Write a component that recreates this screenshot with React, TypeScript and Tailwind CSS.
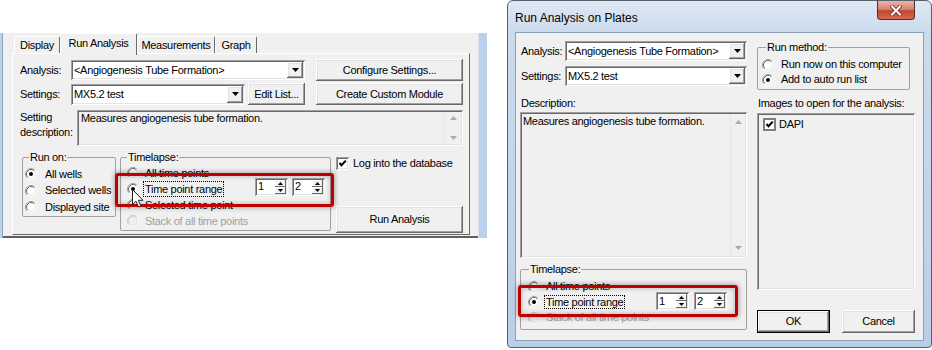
import React from 'react';

const SUNKEN =
  'shadow-[inset_1px_1px_0_#a0a0a0,inset_-1px_-1px_0_#ffffff,inset_2px_2px_0_#696969,inset_-2px_-2px_0_#e3e3e3]';
const RAISED =
  'shadow-[inset_-1px_-1px_0_#696969,inset_1px_1px_0_#ffffff,inset_-2px_-2px_0_#a0a0a0,inset_2px_2px_0_#e3e3e3]';
const RAISED_THIN = 'shadow-[inset_-1px_-1px_0_#696969,inset_1px_1px_0_#ffffff]';
const RED_BOX =
  'absolute border-[3px] border-[#c00000] rounded-[3px] shadow-[0_0_5px_1px_rgba(0,0,0,0.3),inset_0_0_4px_1px_rgba(0,0,0,0.2)] pointer-events-none';
const DISABLED_TEXT = 'text-[#a0a0a0]';

function Tri({ up = false, color = '#000', w = 7, h = 4 }: { up?: boolean; color?: string; w?: number; h?: number }) {
  return (
    <svg width={w} height={h} viewBox={`0 0 ${w} ${h}`} className="block">
      <polygon points={up ? `0,${h} ${w},${h} ${w / 2},0` : `0,0 ${w},0 ${w / 2},${h}`} fill={color} />
    </svg>
  );
}

function Radio({ checked = false, disabled = false }: { checked?: boolean; disabled?: boolean }) {
  const outerDark = disabled ? '#c8c8c8' : '#a0a0a0';
  const innerDark = disabled ? '#d4d4d4' : '#696969';
  return (
    <svg width="12" height="12" viewBox="0 0 12 12" className="shrink-0 block">
      <circle cx="6" cy="6" r="5" fill={disabled ? '#f0f0f0' : '#ffffff'} />
      <path d="M2.11 9.89 A5.5 5.5 0 0 1 9.89 2.11" stroke={outerDark} fill="none" />
      <path d="M9.89 2.11 A5.5 5.5 0 0 1 2.11 9.89" stroke="#ffffff" fill="none" />
      <path d="M2.82 9.18 A4.5 4.5 0 0 1 9.18 2.82" stroke={innerDark} fill="none" />
      <path d="M9.18 2.82 A4.5 4.5 0 0 1 2.82 9.18" stroke="#e3e3e3" fill="none" />
      {checked && <circle cx="6" cy="6" r="2" fill="#000" />}
    </svg>
  );
}

function Check({ flat = false }: { flat?: boolean }) {
  return (
    <div
      className={`w-[13px] h-[13px] bg-white shrink-0 flex items-center justify-center ${
        flat ? 'border-2 border-[#7f7f7f]' : SUNKEN
      }`}
    >
      <svg width="9" height="9" viewBox="0 0 9 9" className="block">
        <path d="M1.5 4 L3.5 6.2 L7.8 1.6" stroke="#000" strokeWidth="2" fill="none" />
      </svg>
    </div>
  );
}

function Combo({ text, className }: { text: string; className: string }) {
  return (
    <div className={`bg-white flex items-stretch p-[2px] ${SUNKEN} ${className}`}>
      <span className="flex-1 pl-[1px] flex items-center whitespace-nowrap overflow-hidden">{text}</span>
      <div className={`w-[16px] flex items-center justify-center bg-[#f0f0f0] ${RAISED}`}>
        <Tri />
      </div>
    </div>
  );
}

function Btn({ children, className }: { children: React.ReactNode; className: string }) {
  return (
    <div className={`flex items-center justify-center bg-[#f0f0f0] shrink-0 ${RAISED} ${className}`}>
      {children}
    </div>
  );
}

function Spinner({ value }: { value: string }) {
  return (
    <div className={`w-[33px] h-[18px] bg-white flex items-stretch p-[2px] shrink-0 ${SUNKEN}`}>
      <span className="flex-1 pl-[1px] flex items-center">{value}</span>
      <div className="w-[11px] flex flex-col">
        <div className={`flex-1 flex items-center justify-center bg-[#f0f0f0] ${RAISED_THIN}`}>
          <Tri up w={5} h={3} />
        </div>
        <div className={`flex-1 flex items-center justify-center bg-[#f0f0f0] ${RAISED_THIN}`}>
          <Tri w={5} h={3} />
        </div>
      </div>
    </div>
  );
}

function Option({
  label,
  checked,
  disabled,
  focused,
  gap,
  height,
}: {
  label: string;
  checked?: boolean;
  disabled?: boolean;
  focused?: boolean;
  gap: string;
  height: string;
}) {
  return (
    <div className={`flex items-center ${height}`}>
      <Radio checked={checked} disabled={disabled} />
      {focused ? (
        <span className={`border border-dotted border-black px-[1px] leading-[14px] ${gap}`}>{label}</span>
      ) : (
        <span className={`whitespace-nowrap ${gap} ${disabled ? DISABLED_TEXT : ''}`}>{label}</span>
      )}
    </div>
  );
}

function Tab({ label, width, selected }: { label: string; width: string; selected?: boolean }) {
  if (selected) {
    return (
      <div
        className={`relative z-10 h-[22px] -mb-[2px] pt-[3px] flex justify-center bg-[#f0f0f0] border-t border-l border-r border-t-white border-l-white border-r-[#696969] rounded-t-[2px] ${width}`}
      >
        {label}
      </div>
    );
  }
  return (
    <div
      className={`h-[17px] flex items-center justify-center border-t border-l border-r border-t-white border-l-white border-r-[#696969] rounded-t-[2px] ${width}`}
    >
      {label}
    </div>
  );
}

function ScrollColumn({ className }: { className: string }) {
  return (
    <div className={`flex flex-col justify-between items-center border-l border-[#e6e6e6] ${className}`}>
      <Tri up w={7} h={4} color="#a9a9a9" />
      <Tri w={7} h={4} color="#a9a9a9" />
    </div>
  );
}

function Cursor() {
  return (
    <svg width="12" height="19" viewBox="0 0 12 19" className="absolute left-[132px] top-[189px]">
      <path d="M0.5 0.5 L0.5 15.5 L4 12.2 L6.6 18 L8.8 17 L6.3 11.3 L11 11.3 Z" fill="#ffffff" stroke="#222" />
    </svg>
  );
}

function LeftPanel() {
  return (
    <div className="w-[487px] h-[205px] mt-[33px] flex shrink-0">
      <div className="w-[3px] bg-[#b9d1ea] border-r border-[#8da4bf]" />
      <div className="w-[475px] bg-[#f0f0f0] border-b-2 border-[#5f5f5f] flex flex-col">
        <div className="ml-[9px] w-[458px] flex flex-col">
          <div className="h-[20px] flex items-end pl-[2px]">
            <Tab label="Display" width="w-[46px]" />
            <Tab label="Run Analysis" width="w-[77px]" selected />
            <Tab label="Measurements" width="w-[78px]" />
            <Tab label="Graph" width="w-[42px]" />
          </div>
          <div className="h-[182px] border border-t-white border-l-white border-r-[#696969] border-b-[#696969] pl-[7px] pt-[5px] flex flex-col">
            <div className="flex items-center h-[22px]">
              <span className="w-[51px]">Analysis:</span>
              <Combo text="<Angiogenesis Tube Formation>" className="w-[234px] h-[20px]" />
              <Btn className="ml-[11px] w-[147px] h-[22px]">Configure Settings...</Btn>
            </div>
            <div className="flex items-center h-[22px] mt-[2px]">
              <span className="w-[51px]">Settings:</span>
              <Combo text="MX5.2 test" className="w-[174px] h-[21px]" />
              <Btn className="ml-[3px] w-[57px] h-[22px]">Edit List...</Btn>
              <Btn className="ml-[11px] w-[147px] h-[22px]">Create Custom Module</Btn>
            </div>
            <div className="flex mt-[5px] h-[36px]">
              <div className="w-[57px] leading-[15px]">
                Setting
                <br />
                description:
              </div>
              <div className={`w-[386px] h-[36px] bg-[#f0f0f0] p-[2px] flex ${SUNKEN}`}>
                <span className="flex-1 pl-[2px]">Measures angiogenesis tube formation.</span>
                <ScrollColumn className="w-[17px] py-[4px]" />
              </div>
            </div>
            <div className="flex mt-[5px]">
              <fieldset className="ml-[2px] w-[94px] h-[66px] border border-[#a0a0a0] rounded-[2px]">
                <legend className="ml-[6px] px-[1px] leading-[13px]">Run on:</legend>
                <div className="pl-[2px] pt-[2px] flex flex-col">
                  <Option label="All wells" checked gap="ml-[8px]" height="h-[16.5px]" />
                  <Option label="Selected wells" gap="ml-[8px]" height="h-[16.5px]" />
                  <Option label="Displayed site" gap="ml-[8px]" height="h-[16.5px]" />
                </div>
              </fieldset>
              <fieldset className="ml-[4px] w-[211px] h-[80px] border border-[#a0a0a0] rounded-[2px]">
                <legend className="ml-[6px] px-[1px] leading-[13px]">Timelapse:</legend>
                <div className="pl-[6px] pr-[5px] pt-[1px] flex flex-col">
                  <Option label="All time points" gap="ml-[6px]" height="h-[16px]" />
                  <div className="flex items-center h-[16px]">
                    <Radio checked />
                    <span className="ml-[4px] border border-dotted border-black px-[1px] leading-[14px]">
                      Time point range
                    </span>
                    <div className="ml-auto mb-[5px] flex gap-[4px]">
                      <Spinner value="1" />
                      <Spinner value="2" />
                    </div>
                  </div>
                  <Option label="Selected time point" gap="ml-[6px]" height="h-[16px]" />
                  <Option label="Stack of all time points" disabled gap="ml-[6px]" height="h-[16px]" />
                </div>
              </fieldset>
              <div className="ml-[5px] w-[127px] h-[82px] flex flex-col justify-between">
                <div className="flex items-center gap-[4px] mt-[6px]">
                  <Check />
                  <span>Log into the database</span>
                </div>
                <Btn className="w-[127px] h-[27px]">Run Analysis</Btn>
              </div>
            </div>
          </div>
        </div>
      </div>
      <div className="w-[9px] bg-[#b9d1ea] border-l border-[#dbe5f1]" />
    </div>
  );
}

function CloseButton() {
  return (
    <div className="absolute top-0 right-[16px] w-[38px] h-[19px] rounded-b-[4px] border border-t-0 border-[#5b2a24] bg-[linear-gradient(180deg,#eab4a8_0%,#d88471_45%,#c4452f_55%,#d76a50_100%)] flex items-center justify-center">
      <svg width="12" height="11" viewBox="0 0 12 11" className="block">
        <path d="M2 1.5 L10 9.5 M10 1.5 L2 9.5" stroke="#6b2b22" strokeWidth="3.6" strokeLinecap="square" />
        <path d="M2 1.5 L10 9.5 M10 1.5 L2 9.5" stroke="#ffffff" strokeWidth="2" strokeLinecap="square" />
      </svg>
    </div>
  );
}

function Dialog() {
  return (
    <div className="ml-[20px] w-[425px] h-[348px] shrink-0 rounded-t-[6px] rounded-b-[4px] border border-[#56616f] bg-[linear-gradient(180deg,#e0e9f4_0px,#cbdbed_30px,#b9cfe7_100%)] flex flex-col relative">
      <div className="h-[31px] pl-[7px] pt-[7px] relative">
        <span className="text-[12px] leading-[20px] tracking-normal">Run Analysis on Plates</span>
        <CloseButton />
      </div>
      <div className="mx-[7px] h-[309px] border border-[#8aa1ba] bg-[#f0f0f0] flex pl-[4px] pt-[8px]">
        <div className="w-[227px] flex flex-col">
          <div className="flex items-center h-[20px]">
            <span className="w-[45px] pl-[1px]">Analysis:</span>
            <Combo text="<Angiogenesis Tube Formation>" className="w-[182px] h-[20px]" />
          </div>
          <div className="flex items-center h-[20px] mt-[5px]">
            <span className="w-[45px] pl-[1px]">Settings:</span>
            <Combo text="MX5.2 test" className="w-[182px] h-[20px]" />
          </div>
          <span className="mt-[11px] pl-[1px] leading-[13px]">Description:</span>
          <div className={`mt-[2px] h-[146px] bg-[#f0f0f0] p-[2px] flex ${SUNKEN}`}>
            <span className="flex-1 pl-[1px] pt-[1px]">Measures angiogenesis tube formation.</span>
            <ScrollColumn className="w-[15px] py-[6px]" />
          </div>
          <fieldset className="mt-[5px] h-[67px] border border-[#a0a0a0] rounded-[2px]">
            <legend className="ml-[8px] px-[1px] leading-[13px]">Timelapse:</legend>
            <div className="pl-[7px] pr-[19px] pt-[3px] flex flex-col">
              <Option label="All time points" gap="ml-[6px]" height="h-[15.5px]" />
              <div className="flex items-center h-[15.5px]">
                <Radio checked />
                <span className="ml-[4px] border border-dotted border-black px-[1px] leading-[12px]">
                  Time point range
                </span>
                <div className="ml-auto mb-[2px] flex gap-[5px]">
                  <Spinner value="1" />
                  <Spinner value="2" />
                </div>
              </div>
              <Option label="Stack of all time points" disabled gap="ml-[6px]" height="h-[15.5px]" />
            </div>
          </fieldset>
        </div>
        <div className="ml-[10px] w-[158px] flex flex-col">
          <fieldset className="w-[153px] h-[49px] border border-[#a0a0a0] rounded-[2px]">
            <legend className="ml-[8px] px-[1px] leading-[13px]">Run method:</legend>
            <div className="pl-[4px] pt-[3px] flex flex-col">
              <Option label="Run now on this computer" gap="ml-[7px]" height="h-[15px]" />
              <Option label="Add to auto run list" checked gap="ml-[7px]" height="h-[15px]" />
            </div>
          </fieldset>
          <span className="mt-[7px] pl-[1px] leading-[13px] whitespace-nowrap">Images to open for the analysis:</span>
          <div className={`mt-[3px] h-[177px] bg-[#f0f0f0] p-[2px] ${SUNKEN}`}>
            <div className="flex items-center gap-[3px] pl-[4px] pt-[3px]">
              <Check flat />
              <span>DAPI</span>
            </div>
          </div>
          <div className="mt-[20px] flex h-[23px]">
            <div className="w-[74px] h-[23px] border border-black">
              <Btn className="w-full h-full">OK</Btn>
            </div>
            <Btn className="ml-[12px] w-[73px] h-[23px]">Cancel</Btn>
          </div>
        </div>
      </div>
    </div>
  );
}

export default function App() {
  return (
    <div className="relative w-[932px] h-[350px] bg-white flex overflow-hidden font-['Liberation_Sans',Arial,sans-serif] text-[11px] leading-[13px] tracking-[-0.3px] text-black">
      <LeftPanel />
      <Dialog />
      <div className={`${RED_BOX} left-[115px] top-[173px] w-[219px] h-[34px]`} />
      <Cursor />
      <div className={`${RED_BOX} left-[518px] top-[285px] w-[220px] h-[32px]`} />
    </div>
  );
}
